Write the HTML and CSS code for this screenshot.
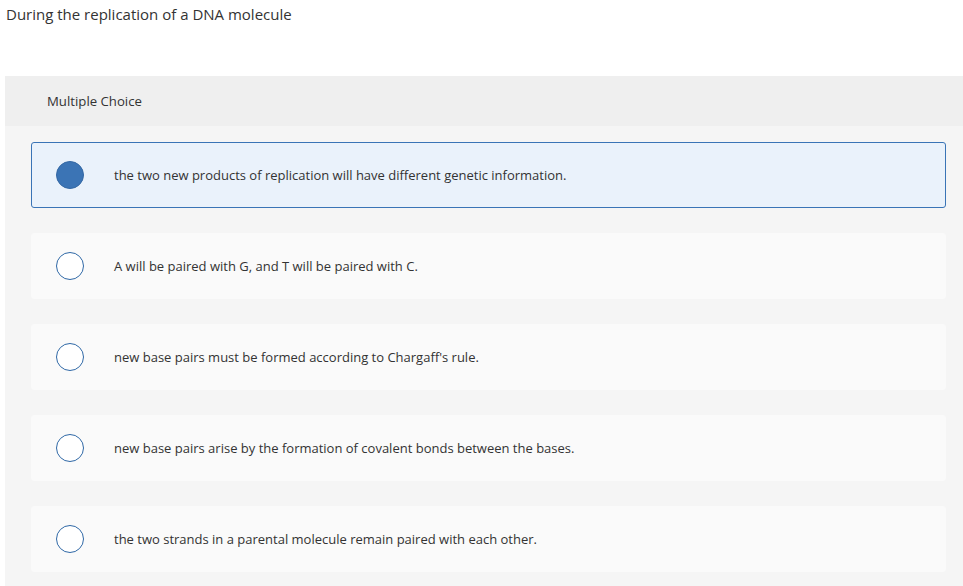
FILE: index.html
```html
<!DOCTYPE html>
<html>
<head>
<meta charset="utf-8">
<link rel="stylesheet" href="styles.css">
</head>
<body>
<p class="question">During the replication of a DNA molecule</p>
<div class="panel">
  <div class="panel-head">Multiple Choice</div>
  <div class="options">
    <div class="option selected"><span class="radio"></span><span class="label">the two new products of replication will have different genetic information.</span></div>
    <div class="option"><span class="radio"></span><span class="label">A will be paired with G, and T will be paired with C.</span></div>
    <div class="option"><span class="radio"></span><span class="label">new base pairs must be formed according to Chargaff's rule.</span></div>
    <div class="option"><span class="radio"></span><span class="label">new base pairs arise by the formation of covalent bonds between the bases.</span></div>
    <div class="option"><span class="radio"></span><span class="label">the two strands in a parental molecule remain paired with each other.</span></div>
  </div>
</div>
</body>
</html>
```
FILE: styles.css
```css
html, body {
  margin: 0;
  padding: 0;
  background: #ffffff;
  overflow: hidden;
}
body {
  font-family: "Open Sans", "Liberation Sans", sans-serif;
  color: #333333;
}
.question {
  margin: 0;
  padding: 4px 0 0 6px;
  font-size: 15px;
  line-height: 20px;
  height: 76px;
  box-sizing: border-box;
  color: #333;
}
.panel {
  margin-left: 5px;
  width: 980px;
  background: #f5f5f5;
}
.panel-head {
  height: 50px;
  background: #efefef;
  display: flex;
  align-items: center;
  padding-left: 42px;
  font-size: 13.2px;
  color: #333;
}
.options {
  padding: 16px 0 20px 26px;
  display: flex;
  flex-direction: column;
  gap: 25px;
}
.option {
  width: 915px;
  height: 66px;
  box-sizing: border-box;
  background: #fafafa;
  border: 1px solid #fafafa;
  border-radius: 3px;
  display: flex;
  align-items: center;
  padding-left: 24px;
}
.option.selected {
  background: #eaf2fb;
  border-color: #3a74b6;
}
.radio {
  width: 28px;
  height: 28px;
  box-sizing: border-box;
  border-radius: 50%;
  border: 1.5px solid #2f68a6;
  background: #ffffff;
  flex: none;
}
.option.selected .radio {
  background: #3b74b5;
  border-color: #3468a4;
}
.label {
  margin-left: 30px;
  font-size: 13px;
  color: #333;
}
```
